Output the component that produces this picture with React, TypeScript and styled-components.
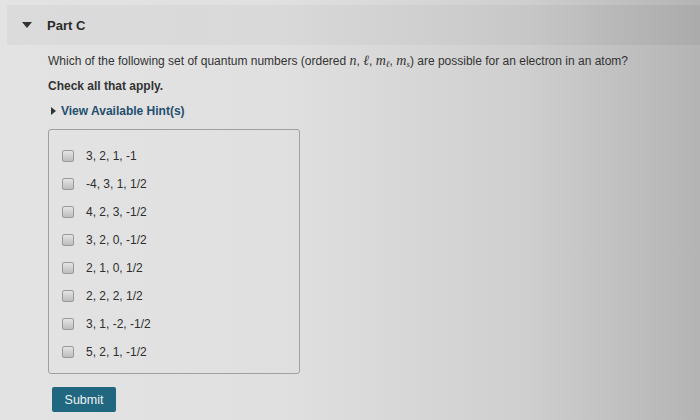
import React from "react";
import styled, { createGlobalStyle } from "styled-components";

const Global = createGlobalStyle`
  html, body { margin: 0; padding: 0; }
  body {
    width: 700px;
    height: 420px;
    overflow: hidden;
    font-family: "Liberation Sans", Arial, sans-serif;
    color: #2a2a2a;
    background: linear-gradient(90deg, #e3e3e3 0%, #e0e0e0 40%, #cfcfcf 75%, #b4b4b4 100%);
  }
`;

const Page = styled.div`
  display: flex;
  flex-direction: column;
  padding-top: 5px;
`;

const Header = styled.div`
  margin-left: 7px;
  height: 40px;
  display: flex;
  align-items: center;
  gap: 15px;
  padding-left: 15px;
  background: linear-gradient(90deg, rgba(0,0,0,0.035) 0%, rgba(0,0,0,0.03) 60%, rgba(0,0,0,0.05) 100%);
`;

const Caret = styled.span`
  width: 0;
  height: 0;
  border-left: 5px solid transparent;
  border-right: 5px solid transparent;
  border-top: 6px solid #333;
`;

const Title = styled.h2`
  margin: 0;
  font-size: 13px;
  font-weight: bold;
  color: #2a2a2a;
`;

const Body = styled.div`
  display: flex;
  flex-direction: column;
  align-items: flex-start;
  padding-left: 48px;
`;

const Question = styled.p`
  margin: 8px 0 0;
  font-size: 12px;
  line-height: 16px;
  color: #333;
`;

const M = styled.i`
  font-family: "Liberation Serif", "Times New Roman", serif;
  font-size: 14px;
`;

const Sub = styled.sub`
  font-family: "Liberation Serif", serif;
  font-style: italic;
  font-size: 9px;
  line-height: 0;
  vertical-align: -2px;
`;

const Instruction = styled.p`
  margin: 9px 0 0;
  font-size: 12px;
  line-height: 16px;
  font-weight: bold;
  color: #333;
`;

const Hint = styled.a`
  margin-top: 9px;
  display: flex;
  align-items: center;
  gap: 5px;
  font-size: 12px;
  line-height: 16px;
  font-weight: bold;
  color: #1f4e6e;
  margin-left: 3px;
`;

const HintCaret = styled.span`
  width: 0;
  height: 0;
  border-top: 4px solid transparent;
  border-bottom: 4px solid transparent;
  border-left: 5px solid #333;
`;

const OptionBox = styled.div`
  margin-top: 10px;
  width: 252px;
  box-sizing: border-box;
  border: 1px solid #a0a0a0;
  border-radius: 3px;
  padding: 12px 0 7px 13px;
  display: flex;
  flex-direction: column;
`;

const Option = styled.label`
  height: 28px;
  display: flex;
  align-items: center;
  gap: 12px;
  font-size: 12px;
  color: #2e2e2e;
`;

const Box = styled.span`
  width: 10px;
  height: 10px;
  border: 1px solid #9a9a9a;
  border-radius: 2px;
  background: linear-gradient(180deg, #e4e4e4, #bdbdbd);
`;

const Submit = styled.button`
  margin-top: 13px;
  margin-left: 4px;
  width: 64px;
  height: 25px;
  border: none;
  border-radius: 2px;
  background: #20677f;
  color: #eef3f5;
  font-family: "Liberation Sans", Arial, sans-serif;
  font-size: 12.5px;
  padding: 0;
`;

const options = [
  "3, 2, 1, -1",
  "-4, 3, 1, 1/2",
  "4, 2, 3, -1/2",
  "3, 2, 0, -1/2",
  "2, 1, 0, 1/2",
  "2, 2, 2, 1/2",
  "3, 1, -2, -1/2",
  "5, 2, 1, -1/2",
];

export default function App() {
  return (
    <>
      <Global />
      <Page>
        <Header>
          <Caret />
          <Title>Part C</Title>
        </Header>
        <Body>
          <Question>
            Which of the following set of quantum numbers (ordered <M>n</M>, <M>ℓ</M>,{" "}
            <M>m</M><Sub>ℓ</Sub>, <M>m</M><Sub>s</Sub>) are possible for an electron in an atom?
          </Question>
          <Instruction>Check all that apply.</Instruction>
          <Hint>
            <HintCaret />
            View Available Hint(s)
          </Hint>
          <OptionBox>
            {options.map((o) => (
              <Option key={o}>
                <Box />
                {o}
              </Option>
            ))}
          </OptionBox>
          <Submit>Submit</Submit>
        </Body>
      </Page>
    </>
  );
}
